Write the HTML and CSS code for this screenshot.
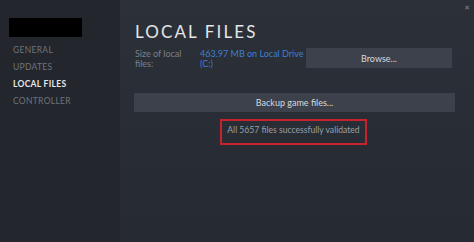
FILE: index.html
```html
<!DOCTYPE html>
<html>
<head>
<meta charset="utf-8">
<link rel="stylesheet" href="styles.css">
</head>
<body>
<div class="window">
  <aside class="sidebar">
    <div class="game-title"></div>
    <nav class="nav">
      <div class="nav-item">GENERAL</div>
      <div class="nav-item">UPDATES</div>
      <div class="nav-item active">LOCAL FILES</div>
      <div class="nav-item">CONTROLLER</div>
    </nav>
  </aside>
  <main class="main">
    <div class="close">✕</div>
    <h1 class="title">LOCAL FILES</h1>
    <div class="info-row">
      <div class="label">Size of local files:</div>
      <div class="link">463.97 MB on Local Drive (C:)</div>
      <div class="btn browse">Browse...</div>
    </div>
    <div class="btn backup">Backup game files...</div>
    <div class="status-wrap">
      <div class="status">All 5657 files successfully validated</div>
    </div>
  </main>
</div>
</body>
</html>
```

FILE: styles.css
```css
html, body {
  margin: 0;
  padding: 0;
  width: 474px;
  height: 242px;
  overflow: hidden;
  background: #262a31;
  font-family: Lato, "Open Sans", sans-serif;
}

.window {
  display: flex;
  width: 474px;
  height: 242px;
}

.sidebar {
  width: 120px;
  flex: none;
  background: #23262c;
  padding: 18px 0 0 9px;
  box-sizing: border-box;
}

.game-title {
  width: 73px;
  height: 19px;
  background: #000;
}

.nav {
  margin-top: 5px;
  padding-left: 4px;
}

.nav-item {
  font-size: 8.5px;
  line-height: 17px;
  color: #6f747c;
  letter-spacing: 0.3px;
}

.nav-item.active {
  color: #e6e8ea;
  font-weight: 700;
}

.main {
  position: relative;
  flex: 1;
  background: linear-gradient(180deg, #2c3038 0%, #282c34 60%, #262a32 100%);
  padding: 22px 19px 0 14px;
  box-sizing: border-box;
}

.close {
  position: absolute;
  top: 4px;
  right: 4px;
  font-size: 7px;
  color: #80858c;
  font-family: "DejaVu Sans", sans-serif;
}

.title {
  margin: 0 0 0 1px;
  font-size: 17px;
  line-height: 20px;
  font-weight: 400;
  letter-spacing: 2.1px;
  color: #e4e6e8;
}

.info-row {
  display: flex;
  align-items: flex-start;
  margin-top: 5px;
  height: 21px;
}

.label {
  width: 65px;
  margin-left: 1px;
  padding-top: 2px;
  font-size: 9px;
  line-height: 10.2px;
  color: #7b8189;
}

.link {
  width: 106px;
  padding-top: 2px;
  font-size: 9px;
  line-height: 10.2px;
  color: #3f7fd3;
}

.btn {
  display: flex;
  align-items: center;
  justify-content: center;
  background: #3c414c;
  color: #d8dadc;
  font-size: 9px;
  border-radius: 1px;
}

.browse {
  margin-top: 1px;
  width: 146px;
  height: 20px;
}

.backup {
  margin-top: 25px;
  height: 19px;
}

.status-wrap {
  display: flex;
  justify-content: center;
  margin-top: 7px;
  padding-right: 2px;
}

.status {
  width: 147px;
  height: 26px;
  box-sizing: border-box;
  border: 2px solid #c8232c;
  display: flex;
  align-items: center;
  justify-content: center;
  padding-bottom: 4px;
  font-size: 8.6px;
  color: #9aa0a7;
}
```
